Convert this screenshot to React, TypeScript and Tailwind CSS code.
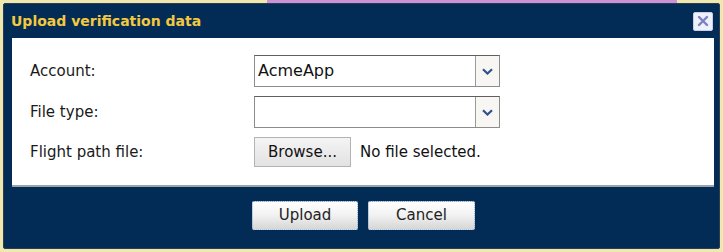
export default function App() {
  const selectBox = (value: string) => (
    <div className="flex h-[32px] w-[246px] border border-[#8c8c8c] border-t-[#5f5f5f] bg-white">
      <div className="flex flex-1 items-center pl-[3px] text-[16px] text-[#111]">{value}</div>
      <div className="flex w-[24px] items-center justify-center border-l border-[#9a9a9a] bg-[#f7f6f2]">
        <svg width="11" height="7" viewBox="0 0 11 7">
          <path d="M1 1.2 L5.5 5.5 L10 1.2" fill="none" stroke="#334f8c" strokeWidth="2.2" />
        </svg>
      </div>
    </div>
  );

  return (
    <div className="flex h-[252px] w-[723px] flex-col overflow-hidden bg-[#efe9b0] font-['DejaVu_Sans',sans-serif]">
      <div className="h-[3px] shrink-0 bg-[linear-gradient(to_right,#efe9b0_267px,#c993d6_267px,#c993d6_677px,#efe9b0_677px)]" />
      <div className="flex flex-1 items-start pl-[3px]">
        <div className="flex h-[246px] w-[717px] flex-col rounded-[2px] border border-[#2b3d52] bg-[#022b55]">
          <div className="flex h-[34px] items-center justify-between pl-[7px] pr-[6px]">
            <span className="text-[14px] font-bold text-[#f3c940]">Upload verification data</span>
            <div className="flex h-[19px] w-[20px] items-center justify-center rounded-[2px] border border-[#c9cde6] bg-[#eef0fa]">
              <svg width="12" height="12" viewBox="0 0 12 12">
                <path d="M2 2 L10 10 M10 2 L2 10" stroke="#7a80c4" strokeWidth="2.4" strokeLinecap="round" />
              </svg>
            </div>
          </div>

          <div className="ml-[8px] mr-[5px] h-[149px] border-b-2 border-[#9aa3ad] bg-white pl-[18px] pt-[17px]">
            <div className="grid grid-cols-[224px_auto] items-center gap-y-[9px] text-[15px] text-[#1a1a1a]">
              <span>Account:</span>
              {selectBox("AcmeApp")}
              <span>File type:</span>
              {selectBox("")}
              <span>Flight path file:</span>
              <div className="flex items-center gap-[9px]">
                <div className="flex h-[30px] w-[97px] items-center justify-center border border-[#b3b3b3] bg-[linear-gradient(#f4f4f4,#e2e2e2)] text-[15px] text-[#111]">
                  Browse...
                </div>
                <span className="text-[15px] text-[#111]">No file selected.</span>
              </div>
            </div>
          </div>

          <div className="ml-[4px] mt-[14px] flex justify-center gap-[10px]">
            <div className="flex h-[29px] w-[106px] items-center justify-center rounded-[2px] border border-dotted border-[#8ea6c8] bg-[linear-gradient(#ffffff,#f1f1f1_50%,#d6d6d6)] text-[15px] text-[#222]">
              Upload
            </div>
            <div className="flex h-[29px] w-[107px] items-center justify-center rounded-[2px] border border-dotted border-[#8ea6c8] bg-[linear-gradient(#ffffff,#f1f1f1_50%,#d6d6d6)] text-[15px] text-[#222]">
              Cancel
            </div>
          </div>
        </div>
      </div>
    </div>
  );
}
